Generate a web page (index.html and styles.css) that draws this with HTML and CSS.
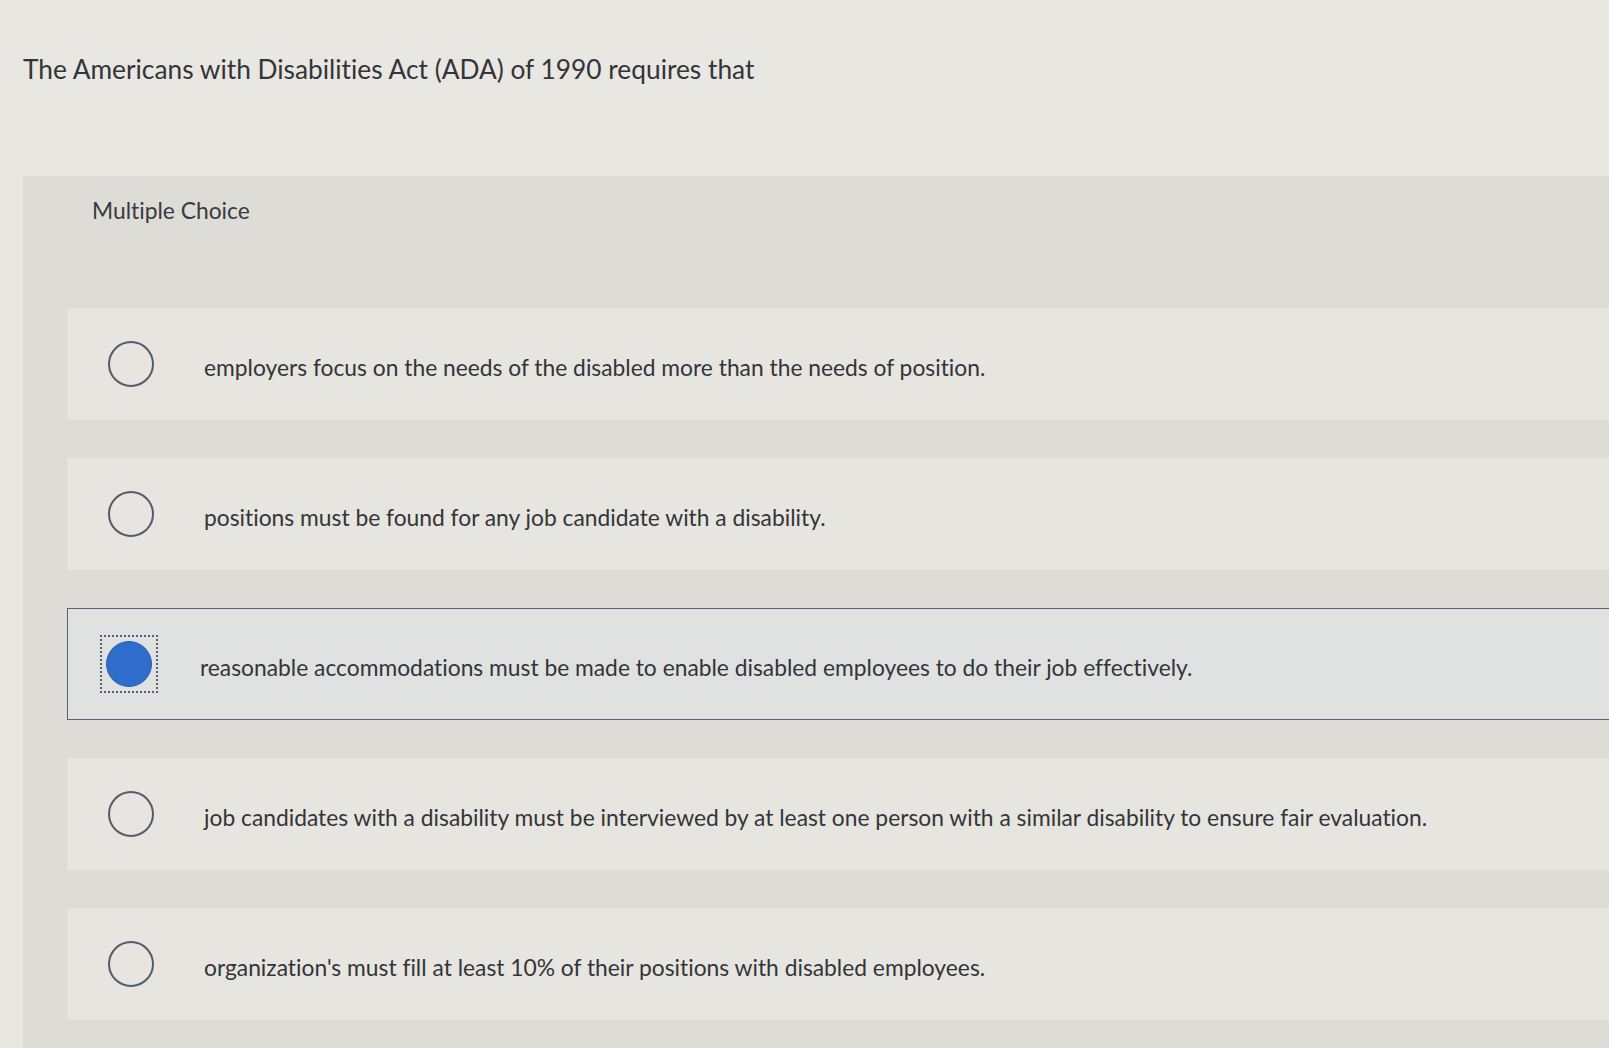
FILE: index.html
```html
<!DOCTYPE html>
<html lang="en">
<head>
<meta charset="utf-8">
<title>Multiple Choice</title>
<link rel="stylesheet" href="styles.css">
</head>
<body>
<main class="page">
  <p class="question">The Americans with Disabilities Act (ADA) of 1990 requires that</p>
  <section class="panel">
    <h2 class="panel-title">Multiple Choice</h2>
    <ul class="choices">
      <li class="choice"><span class="radio"></span><span class="label">employers focus on the needs of the disabled more than the needs of position.</span></li>
      <li class="choice"><span class="radio"></span><span class="label">positions must be found for any job candidate with a disability.</span></li>
      <li class="choice choice-selected"><span class="focus"><span class="radio radio-on"></span></span><span class="label">reasonable accommodations must be made to enable disabled employees to do their job effectively.</span></li>
      <li class="choice"><span class="radio"></span><span class="label">job candidates with a disability must be interviewed by at least one person with a similar disability to ensure fair evaluation.</span></li>
      <li class="choice"><span class="radio"></span><span class="label">organization's must fill at least 10% of their positions with disabled employees.</span></li>
    </ul>
  </section>
</main>
</body>
</html>
```
FILE: styles.css
```css
html, body {
  margin: 0;
  padding: 0;
  height: 100%;
  overflow: hidden;
}
body {
  background: #e8e7e1;
  font-family: "Lato", "Open Sans", sans-serif;
  font-variant-ligatures: none;
  color: #34343a;
}
.page {
  padding: 52px 0 0 23px;
}
.question {
  margin: 0 0 0 0;
  font-size: 26.3px;
  line-height: 34px;
  color: #34343a;
}
.panel {
  margin-top: 90px;
  background: #dedcd6;
  padding: 16px 0 40px 44px;
}
.panel-title {
  margin: 0 0 0 25px;
  font-size: 22.8px;
  font-weight: 400;
  line-height: 36px;
  color: #3a3a42;
}
.choices {
  list-style: none;
  margin: 80px 0 0 0;
  padding: 0;
  display: flex;
  flex-direction: column;
  gap: 38px;
}
.choice {
  display: flex;
  align-items: center;
  height: 112px;
  background: #e6e5df;
  padding-left: 41px;
  box-sizing: border-box;
}
.choice-selected {
  background: #dfe2e1;
  border: 1px solid #5a6170;
  border-right: none;
  padding-left: 32px;
}
.radio {
  flex: none;
  width: 42px;
  height: 42px;
  border: 2px solid #575a6c;
  border-radius: 50%;
  box-sizing: content-box;
}
.focus {
  flex: none;
  display: flex;
  align-items: center;
  justify-content: center;
  width: 54px;
  height: 54px;
  border: 2px dotted #5b6172;
  margin-right: -2px;
}
.radio-on {
  width: 44px;
  height: 44px;
  border: 1px solid #2a5fb0;
  background: #2f6ccc;
}
.label {
  margin-left: 50px;
  padding-top: 6px;
  font-size: 22.8px;
  line-height: 28px;
  color: #34343a;
}
.choice-selected .label {
  margin-left: 44px;
}
```
